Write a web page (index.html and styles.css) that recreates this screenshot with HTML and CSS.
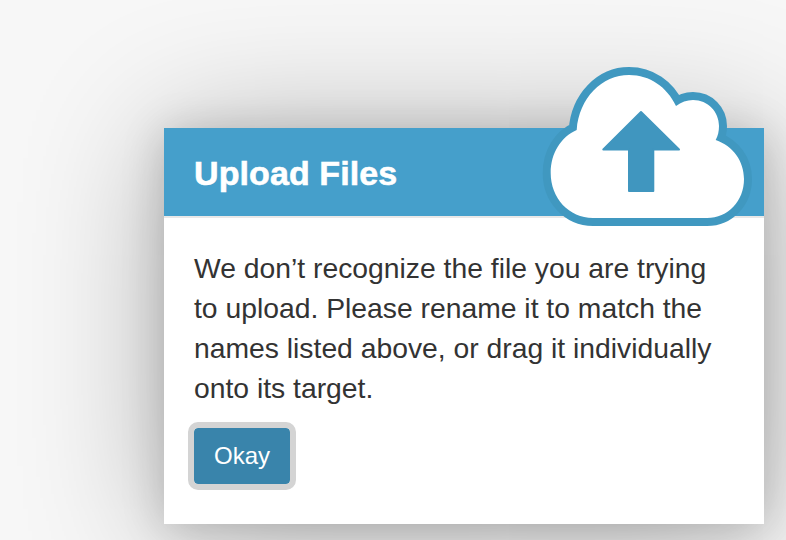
FILE: index.html
```html
<!DOCTYPE html>
<html lang="en">
<head>
    <meta charset="UTF-8">
    <title>Upload Files</title>
    <link rel="stylesheet" href="styles.css">
</head>
<body>

<div class="dialog">
    <div class="dialog-head">
        <h2>Upload Files</h2>
    </div>
    <svg class="cloud" viewBox="0 0 220 170" width="220" height="170">
        <path class="cloud-body" d="M36.7 70C39 38 62 15 89 15C110 15 127 27 136 46C141 42 147 40 153 40C168 40 179 52 179 66C179 71 178 76 175.7 80C193 86 204 101 204 119C204 141 188 158 167 158L53 158C29 158 10.7 138 10.7 113C10.7 93 21 77 36.7 70Z"/>
        <path class="cloud-arrow" d="M101 52L139 89.500L113.300 89.500L113.300 131L89 131L89 89.500L63.300 89.500Z"/>
    </svg>
    <div class="dialog-body">
        <p>We don’t recognize the file you are trying to upload. Please rename it to match the names listed above, or drag it individually onto its target.</p>
        <button class="okay">Okay</button>
    </div>
</div>

</body>
</html>
```

FILE: styles.css
```css
html,
body {
    margin: 0;
    height: 540px;
    overflow: hidden;
    background: #f7f7f7;
    color: #333;
    font-family: "Liberation Sans", Arial, sans-serif;
}

body {
    padding: 128px 22px 0 164px;
    box-sizing: border-box;
}

.dialog {
    position: relative;
    width: 600px;
    height: 396px;
    background: #fff;
    box-shadow: 0 4px 40px rgba(0, 0, 0, 0.18), 0 8px 140px rgba(0, 0, 0, 0.3);
}

.dialog-head {
    height: 86px;
    padding: 2px 0 0 30px;
    display: flex;
    align-items: center;
    background: #459fcb;
    border-bottom: 2px solid #e8e8e8;
}

.dialog-head h2 {
    margin: 0;
    color: #fff;
    font-size: 34px;
    font-weight: bold;
    letter-spacing: 0.1px;
    -webkit-text-stroke: 0.6px #fff;
}

.cloud {
    position: absolute;
    left: 376px;
    top: -68px;
}

.cloud-body {
    fill: #fff;
    stroke: #4098c0;
    stroke-width: 16;
    paint-order: stroke;
}

.cloud-arrow {
    fill: #4096bf;
    stroke: #4096bf;
    stroke-width: 2;
    stroke-linejoin: round;
}

.dialog-body {
    padding: 30px 30px 0;
}

.dialog-body p {
    margin: 0 0 20px;
    max-width: 530px;
    font-size: 28.300px;
    line-height: 40px;
}

.okay {
    display: block;
    width: 96px;
    height: 56px;
    padding: 0;
    border: 0;
    border-radius: 4px;
    background: #3984ab;
    color: #fff;
    font-family: inherit;
    font-size: 24px;
    outline: 6px solid #d4d4d4;
}
```
